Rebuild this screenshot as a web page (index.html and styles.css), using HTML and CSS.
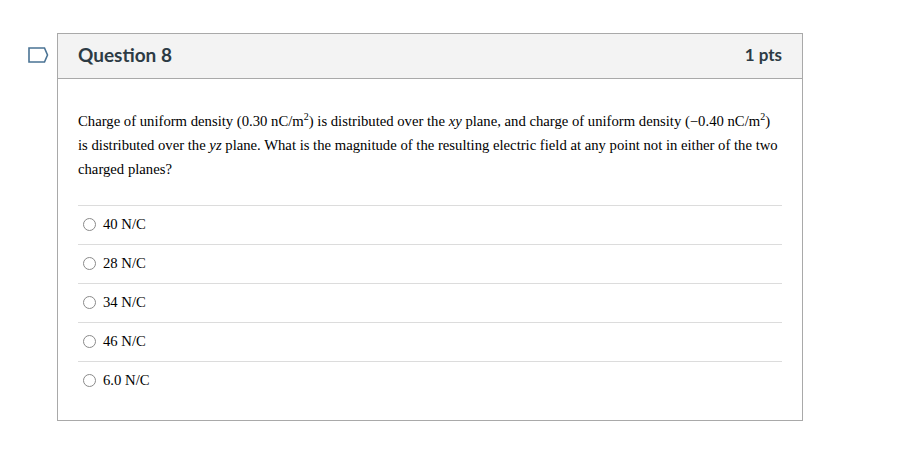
FILE: index.html
```html
<!DOCTYPE html>
<html>
<head>
<meta charset="utf-8">
<link rel="stylesheet" href="styles.css">
</head>
<body>
<div class="page">
  <div class="flag-col">
    <svg class="flag" width="21" height="16" viewBox="0 0 21 16">
      <path d="M1 1 H16.5 L19.5 8 L16.5 15 H1 Z" fill="none" stroke="#4a7394" stroke-width="1.6"/>
    </svg>
  </div>
  <div class="question">
    <div class="q-header">
      <span class="q-title">Question 8</span>
      <span class="q-pts">1 pts</span>
    </div>
    <div class="q-body">
      <p class="q-text">Charge of uniform density (0.30 nC/m<sup>2</sup>) is distributed over the <i>xy</i> plane, and charge of uniform density (−0.40 nC/m<sup>2</sup>) is distributed over the <i>yz</i> plane. What is the magnitude of the resulting electric field at any point not in either of the two charged planes?</p>
      <div class="answers">
        <label class="answer"><span class="radio"></span><span>40 N/C</span></label>
        <label class="answer"><span class="radio"></span><span>28 N/C</span></label>
        <label class="answer"><span class="radio"></span><span>34 N/C</span></label>
        <label class="answer"><span class="radio"></span><span>46 N/C</span></label>
        <label class="answer"><span class="radio"></span><span>6.0 N/C</span></label>
      </div>
    </div>
  </div>
</div>
</body>
</html>
```
FILE: styles.css
```css
html, body {
  margin: 0;
  padding: 0;
  background: #ffffff;
}
.page {
  display: flex;
  align-items: flex-start;
  padding: 33px 0 0 28px;
}
.flag-col {
  width: 29px;
  padding-top: 14px;
}
.flag {
  display: block;
}
.question {
  width: 744px;
  border: 1px solid #a9a9a9;
  box-sizing: content-box;
}
.q-header {
  display: flex;
  justify-content: space-between;
  align-items: center;
  height: 40px;
  padding: 0 20px 4px 20px;
  background: #f3f3f3;
  border-bottom: 1px solid #a9a9a9;
  font-family: Lato, "Liberation Sans", sans-serif;
  font-weight: 700;
  color: #2d3b45;
}
.q-title {
  font-size: 19px;
}
.q-pts {
  font-size: 17px;
}
.q-body {
  padding: 30px 20px 20px 20px;
}
.q-text {
  margin: 0 0 24px 0;
  font-family: "Liberation Serif", "Times New Roman", serif;
  font-size: 14.7px;
  line-height: 24px;
  color: #000;
}
.q-text sup {
  font-size: 10px;
  line-height: 0;
  vertical-align: 6px;
}
.answers {
  display: flex;
  flex-direction: column;
}
.answer {
  display: flex;
  align-items: center;
  gap: 7px;
  height: 38px;
  padding-left: 5px;
  padding-bottom: 1px;
  box-sizing: content-box;
  border-top: 1px solid #dcdcdc;
  font-family: "Liberation Serif", "Times New Roman", serif;
  font-size: 14.7px;
  color: #000;
}
.answer {
  height: 37px;
}
.radio {
  width: 11px;
  height: 11px;
  border: 1px solid #8a8a8a;
  border-radius: 50%;
  background: #fff;
}
```
